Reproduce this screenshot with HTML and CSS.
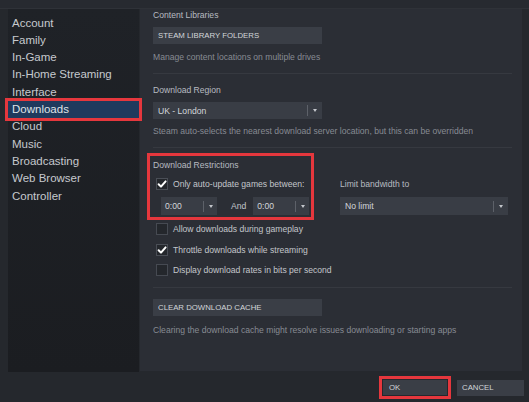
FILE: index.html
```html
<!DOCTYPE html>
<html>
<head>
<meta charset="utf-8">
<link rel="stylesheet" href="styles.css">
</head>
<body>
<div class="window">
  <div class="topbar"></div>
  <div class="main">
    <nav class="sidebar">
      <div class="nav-item">Account</div>
      <div class="nav-item">Family</div>
      <div class="nav-item">In-Game</div>
      <div class="nav-item">In-Home Streaming</div>
      <div class="nav-item">Interface</div>
      <div class="nav-item active">Downloads</div>
      <div class="nav-item">Cloud</div>
      <div class="nav-item">Music</div>
      <div class="nav-item">Broadcasting</div>
      <div class="nav-item">Web Browser</div>
      <div class="nav-item">Controller</div>
    </nav>
    <section class="panel">
      <div class="heading">Content Libraries</div>
      <div class="btn wide m6">STEAM LIBRARY FOLDERS</div>
      <div class="desc m7">Manage content locations on multiple drives</div>
      <div class="sep"></div>

      <div class="heading m10">Download Region</div>
      <div class="select wide m6"><span class="value">UK - London</span><span class="arrow"></span></div>
      <div class="desc m6">Steam auto-selects the nearest download server location, but this can be overridden</div>
      <div class="sep"></div>

      <div class="restrict-row">
        <div class="restrict">
          <div class="heading">Download Restrictions</div>
          <div class="check-row m7"><span class="box checked"><svg viewBox="0 0 12 12" width="12" height="12"><path d="M2.6 6.2 L5 8.6 L9.6 3.4" fill="none" stroke="#ffffff" stroke-width="2" stroke-linecap="round" stroke-linejoin="round"/></svg></span><span class="label">Only auto-update games between:</span></div>
          <div class="time-row">
            <div class="select time"><span class="value">0:00</span><span class="arrow"></span></div>
            <span class="and">And</span>
            <div class="select time"><span class="value">0:00</span><span class="arrow"></span></div>
          </div>
        </div>
        <div class="bandwidth">
          <div class="heading">Limit bandwidth to</div>
          <div class="select bw m7"><span class="value">No limit</span><span class="arrow"></span></div>
        </div>
      </div>

      <div class="check-row m3"><span class="box"></span><span class="label">Allow downloads during gameplay</span></div>
      <div class="check-row m9"><span class="box checked"><svg viewBox="0 0 12 12" width="12" height="12"><path d="M2.6 6.2 L5 8.6 L9.6 3.4" fill="none" stroke="#ffffff" stroke-width="2" stroke-linecap="round" stroke-linejoin="round"/></svg></span><span class="label">Throttle downloads while streaming</span></div>
      <div class="check-row m8"><span class="box"></span><span class="label">Display download rates in bits per second</span></div>
      <div class="sep sep-b"></div>

      <div class="btn wide m11">CLEAR DOWNLOAD CACHE</div>
      <div class="desc m8">Clearing the download cache might resolve issues downloading or starting apps</div>
    </section>
  </div>
  <div class="footer">
    <div class="btn ok">OK</div>
    <div class="btn cancel">CANCEL</div>
  </div>
</div>
</body>
</html>
```

FILE: styles.css
```css
* { box-sizing: border-box; }
html, body { margin: 0; padding: 0; }
body {
  background: #24272c;
  font-family: "Liberation Sans", Arial, sans-serif;
  color: #c8cbd0;
}
.window {
  width: 529px;
  height: 402px;
  display: flex;
  flex-direction: column;
  background: #25282d;
  overflow: hidden;
}
.topbar {
  height: 9px;
  flex: none;
  background: #272a30;
  border-bottom: 1px solid #2f3238;
}
.main {
  height: 363px;
  flex: none;
  display: flex;
  padding-left: 8px;
  gap: 1px;
}
.sidebar {
  width: 131px;
  flex: none;
  background: linear-gradient(#1f2227, #1b1d21);
  padding-top: 5.6px;
  font-size: 11.5px;
}
.nav-item {
  height: 17.3px;
  line-height: 17.3px;
  padding-left: 4px;
  color: #c6c9ce;
  white-space: nowrap;
}
.nav-item.active {
  background: #1f3a5d;
  color: #dfe3e8;
  box-shadow: 0 0 0 3px #e5373d;
  position: relative;
}
.panel {
  width: 382px;
  flex: none;
  height: 362px;
  background: #2b2e35;
  padding: 0 10px 0 13px;
  font-size: 8.6px;
}
.heading {
  line-height: 12px;
  height: 12px;
  color: #b7bbc1;
  white-space: nowrap;
}
.desc {
  line-height: 12px;
  height: 12px;
  color: #878b93;
  white-space: nowrap;
}
.m3 { margin-top: 3px; }
.m6 { margin-top: 6px; }
.m7 { margin-top: 7px; }
.m8 { margin-top: 8px; }
.m9 { margin-top: 9px; }
.m10 { margin-top: 10px; }
.m11 { margin-top: 11px; }
.sep {
  margin-top: 10px;
  height: 1px;
  background: #363940;
}
.sep-b { margin-top: 11px; }
.btn {
  height: 17px;
  line-height: 17px;
  background: #3a3e46;
  color: #d3d6da;
  font-size: 7.8px;
  padding-left: 5px;
  white-space: nowrap;
}
.wide { width: 169px; }
.select {
  display: flex;
  align-items: center;
  height: 17px;
  background: #393d45;
  color: #d3d6da;
}
.select .value {
  flex: 1;
  padding-left: 5px;
  white-space: nowrap;
}
.select .arrow {
  width: 15px;
  height: 11px;
  flex: none;
  border-left: 1px solid #5d6169;
  display: flex;
  align-items: center;
  justify-content: center;
}
.select .arrow::after {
  content: "";
  border-left: 2.5px solid transparent;
  border-right: 2.5px solid transparent;
  border-top: 3px solid #c3c6cb;
}
.restrict-row {
  display: flex;
  align-items: flex-start;
}
.restrict {
  margin-top: 5px;
  margin-left: -6px;
  width: 167px;
  border: 3px solid #e5373d;
  padding: 3px 0 2px 3px;
}
.check-row {
  display: flex;
  align-items: center;
  height: 12px;
  padding-left: 3px;
}
.box {
  width: 12px;
  height: 12px;
  flex: none;
  border: 1px solid #464a52;
  background: #24272c;
  display: flex;
  align-items: center;
  justify-content: center;
}
.box.checked { border-color: #4a4e56; }
.box svg { display: block; flex: none; }
.label {
  margin-left: 5px;
  color: #c3c6cb;
  white-space: nowrap;
}
.time-row {
  display: flex;
  align-items: center;
  margin-top: 7px;
  padding-left: 8px;
}
.select.time {
  width: 56px;
  height: 18px;
}
.select.time .value { padding-left: 4px; }
.select.time .arrow { width: 14px; }
.and {
  margin-left: 14px;
  margin-right: 7px;
  color: #c3c6cb;
}
.bandwidth {
  margin-left: 26px;
  padding-top: 30px;
}
.select.bw {
  width: 168px;
  height: 18px;
}
.footer {
  flex: 1;
  display: flex;
  justify-content: flex-end;
  align-items: flex-start;
  padding-top: 8px;
  padding-right: 5px;
  gap: 10px;
}
.btn.ok {
  width: 64px;
  height: 15px;
  line-height: 15px;
  padding-left: 6px;
  box-shadow: 0 0 0 1px #25282d, 0 0 0 4px #e5373d;
}
.btn.cancel {
  width: 67px;
  height: 16px;
  line-height: 16px;
  padding-left: 5px;
}
```
